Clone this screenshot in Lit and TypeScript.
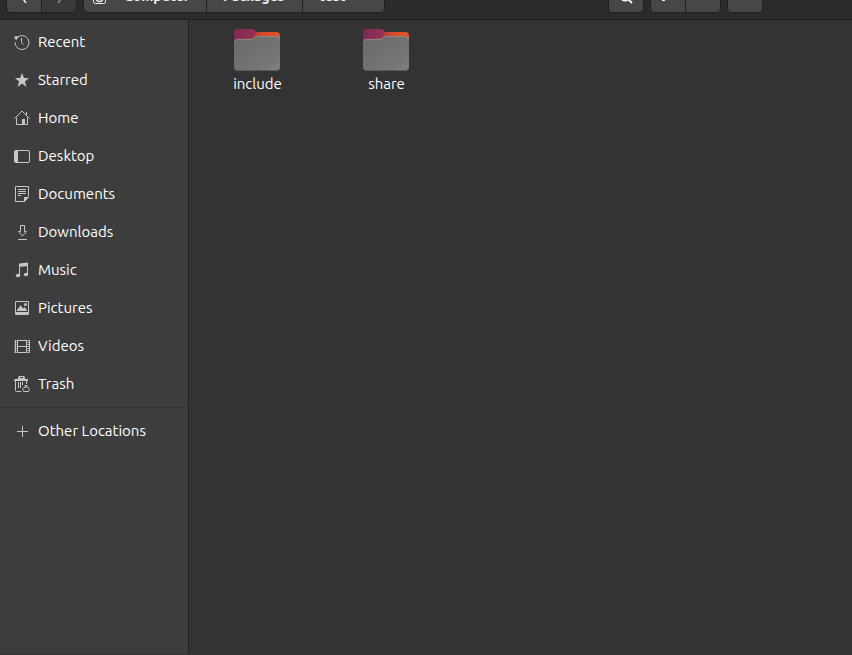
import { LitElement, html, css, svg } from "lit";
import { customElement } from "lit/decorators.js";

const icons = {
  recent: svg`<path d="M2.700 4A7 7 0 1 1 1 8.500" fill="none" stroke="currentColor"/><path d="M0 2.500 5.200 2 2 6.500z"/><path d="M7.500 4v4.500l2 2" fill="none" stroke="currentColor"/>`,
  starred: svg`<path d="M8 1l1.900 5H15l-4.100 3.400L12.500 15 8 11.600 3.500 15l1.600-5.600L1 6h5.100z"/>`,
  home: svg`<path d="M.5 8.500 8 1l7.500 7.500M2.500 7.500v7h11v-7M12.500 2v3" fill="none" stroke="currentColor"/><path d="M8 9h3v6H8z"/>`,
  desktop: svg`<rect x=".5" y="2.500" width="15" height="12" rx="1.500" fill="none" stroke="currentColor"/><path d="M1 3h3v11H1z"/>`,
  documents: svg`<path d="M1.500.5h13v10l-4 5h-9z" fill="none" stroke="currentColor"/><path d="M10 11h5l-5 5zM4 3h8v1H4zM4 5h8v1H4zM4 7h8v1H4zM4 9h3v1H4z"/>`,
  downloads: svg`<path d="M6.500 1.500v6h-2L8.500 12l4-4.500h-2v-6zM4 15.500h9" fill="none" stroke="currentColor"/>`,
  music: svg`<path d="M5 1.500 14 .5V4L5 5z"/><path d="M5.500 3v10M13.500 2v10" fill="none" stroke="currentColor"/><ellipse cx="4" cy="13.500" rx="2.200" ry="1.800"/><ellipse cx="12" cy="12.500" rx="2.200" ry="1.800"/>`,
  pictures: svg`<path d="M1.500 1.500h13v13h-13z" fill="none" stroke="currentColor"/><path d="M3 11V9.500L4 9l2.500-4L9 8.500 10.500 7l2.500 3v1zM1 12h14v2H1z"/><circle cx="11.500" cy="4.500" r="1.500"/>`,
  videos: svg`<path d="M3.500 2v13M12.500 2v13M3 2.500h10M3 8.500h10M3 14.500h10" fill="none" stroke="currentColor"/><path d="M1.500 2v13M14.500 2v13" fill="none" stroke="currentColor" stroke-dasharray="1 1" stroke-width="2"/><path d="M1.500 2v13M15.500 2v13" fill="none" stroke="currentColor"/>`,
  trash: svg`<path d="M1 3h13v2H0V4zM4 1.500 5 0h5l1 1.500V3H4z"/><path d="M6 1h3v1H6z" fill="#3d3d3d"/><path d="M1.500 5v9.500q0 1 1 1H7M4.500 6v6M6.500 6v6M8.500 6v3M12.500 5v3" fill="none" stroke="currentColor"/><path d="M11 9.500h2l-.5 1.500 2 .5 1 2-1 2h-5l-1-2 1.500-2h1.500z" fill="none" stroke="currentColor"/>`,
  plus: svg`<path d="M8.500 3v11M3 8.500h11" fill="none" stroke="currentColor"/>`,
  back: svg`<path d="M10 1 5 8l5 7" fill="none" stroke="currentColor" stroke-width="1.500"/>`,
  forward: svg`<path d="m7 1 5 7-5 7" fill="none" stroke="currentColor" stroke-width="1.500"/>`,
  disk: svg`<rect x="1.500" y="1" width="12" height="14.500" rx="2" fill="none" stroke="currentColor"/><circle cx="7.500" cy="10" r="3.500" fill="none" stroke="currentColor" stroke-width="1.500"/><path d="M6 11h3v1H6z"/>`,
  search: svg`<circle cx="7" cy="8" r="4.500" fill="none" stroke="currentColor" stroke-width="2"/><path d="m10 11 4 4" stroke="currentColor" stroke-width="2"/>`,
  list: svg`<path d="M2 2h3v3H2zM2 6h3v3H2zM2 10h3v3H2zM7 3h7v1H7zM7 7h7v1H7zM7 11h7v1H7z"/>`,
};

const icon = (name: keyof typeof icons) =>
  html`<svg class="icon" viewBox="0 0 16 16" width="16" height="16" aria-hidden="true">${icons[name]}</svg>`;

const places: [keyof typeof icons, string][] = [
  ["recent", "Recent"],
  ["starred", "Starred"],
  ["home", "Home"],
  ["desktop", "Desktop"],
  ["documents", "Documents"],
  ["downloads", "Downloads"],
  ["music", "Music"],
  ["pictures", "Pictures"],
  ["videos", "Videos"],
  ["trash", "Trash"],
];

@customElement("app-root")
export class AppRoot extends LitElement {
  static styles = css`
    :host {
      display: flex;
      flex-direction: column;
      box-sizing: border-box;
      min-height: 100vh;
      border-bottom: 1px solid #3a3437;
      background: #333333;
      color: #ffffff;
      font: 15px/20px "Ubuntu", "Noto Sans", sans-serif;
    }
    * { box-sizing: border-box; }
    .icon { display: block; flex: none; fill: currentColor; }
    .header {
      display: flex;
      align-items: flex-end;
      gap: 6px;
      height: 20px;
      padding: 0 89px 6px 6px;
      overflow: hidden;
      background: #2b2b2b;
      border-bottom: 1px solid #212121;
    }
    .group {
      display: flex;
      flex: none;
      border: 1px solid #202020;
      border-radius: 5px;
      overflow: hidden;
    }
    .spacer { flex: 1; }
    button {
      display: flex;
      align-items: flex-end;
      justify-content: center;
      gap: 16px;
      min-width: 34px;
      height: 34px;
      padding: 0 8px 8px;
      border: 0;
      background: #474747;
      color: #f0f0f0;
      font: 700 14px/16px "Ubuntu", "Noto Sans", sans-serif;
    }
    button + button { border-left: 1px solid #202020; min-width: 35px; }
    button:disabled { background: #3a3a3a; color: #8a8a8a; }
    .path button { justify-content: flex-start; }
    .path .root { min-width: 122px; }
    .path .crumb { min-width: 96px; padding: 0 16px 8px; }
    .path .crumb:last-child { min-width: 82px; }
    .body { display: flex; flex: 1; }
    .sidebar {
      flex: none;
      width: 189px;
      padding-top: 3px;
      background: #3d3d3d;
      border-right: 1px solid #202020;
    }
    .place {
      display: flex;
      align-items: center;
      gap: 8px;
      height: 38px;
      padding-left: 14px;
      color: inherit;
      text-decoration: none;
    }
    .place .icon { color: #c6c6c6; }
    .separator { height: 1px; margin: 4px 0; border: 0; background: #353535; }
    .files {
      flex: 1;
      display: grid;
      grid-template-columns: repeat(auto-fill, 129px);
      align-content: start;
      padding: 6px 4px;
    }
    .file {
      display: flex;
      flex-direction: column;
      align-items: center;
      color: inherit;
      text-decoration: none;
    }
    .folder { display: block; }
  `;

  private folder(name: string) {
    return html`<a class="file" href="#${name}">
      <svg class="folder" width="48" height="48" viewBox="1 0 48 48" aria-hidden="true">
        <defs>
          <linearGradient id="back"><stop offset="0" stop-color="#86305a"/><stop offset=".4" stop-color="#a63a4f"/><stop offset=".6" stop-color="#d0482f"/><stop offset="1" stop-color="#e95420"/></linearGradient>
          <linearGradient id="tab"><stop offset="0" stop-color="#7e2957"/><stop offset="1" stop-color="#963254"/></linearGradient>
          <linearGradient id="front" x2="1" y2="1"><stop offset="0" stop-color="#696969"/><stop offset=".86" stop-color="#787878"/><stop offset=".87" stop-color="#7f7f7f"/><stop offset="1" stop-color="#7b7b7b"/></linearGradient>
        </defs>
        <path d="M1 7q0-4 4-4h15l3 3h20q4 0 4 4v15H1z" fill="url(#back)"/>
        <path d="M1 7q0-4 4-4h14q2 0 3 2l1 2-3 5H1z" fill="url(#tab)"/>
        <path d="M1 17q0-4 4-4h14l4-3h20q4 0 4 4v27q0 4-4 4H5q-4 0-4-4z" fill="url(#front)"/>
        <path d="M1.500 17q0-3.500 3.500-3.500h14l4-3h20q3.500 0 3.500 3.500" fill="none" stroke="#8c8583"/>
        <path d="M2 43q1 1.500 3 1.500h38q2 0 3-1.500" fill="none" stroke="#5c5c5c"/>
      </svg>
      <span>${name}</span>
    </a>`;
  }

  render() {
    return html`
      <header class="header">
        <div class="group">
          <button aria-label="Back">${icon("back")}</button>
          <button aria-label="Forward" disabled>${icon("forward")}</button>
        </div>
        <nav class="group path" aria-label="Path">
          <button class="root">${icon("disk")}Computer</button>
          <button class="crumb">Packages</button>
          <button class="crumb">test</button>
        </nav>
        <div class="spacer"></div>
        <div class="group"><button aria-label="Search">${icon("search")}</button></div>
        <div class="group">
          <button aria-label="View">${icon("list")}</button>
          <button aria-label="View options"></button>
        </div>
        <div class="group"><button aria-label="Menu"></button></div>
      </header>
      <div class="body">
        <nav class="sidebar" aria-label="Places">
          ${places.map(([key, label]) => html`<a class="place" href="#${key}">${icon(key)}${label}</a>`)}
          <hr class="separator" />
          <a class="place" href="#other">${icon("plus")}Other Locations</a>
        </nav>
        <main class="files">${this.folder("include")}${this.folder("share")}</main>
      </div>
    `;
  }
}
